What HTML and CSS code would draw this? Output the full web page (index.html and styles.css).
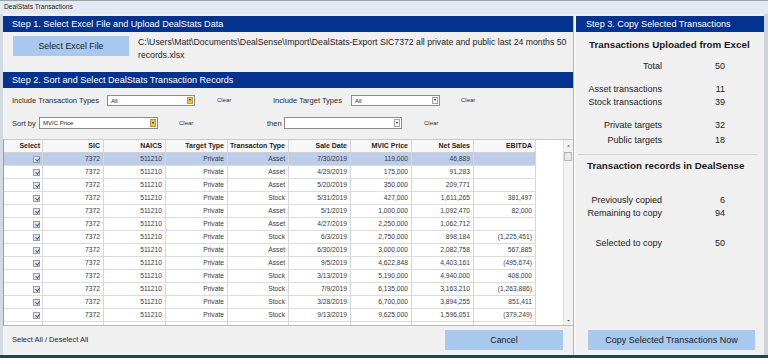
FILE: index.html
```html
<!DOCTYPE html>
<html>
<head>
<meta charset="utf-8">
<title>DealStats Transactions</title>
<link rel="stylesheet" href="styles.css">
</head>
<body>
<div class="window">
  <div class="titlebar">DealStats Transactions</div>
  <div class="main">
    <div class="left">
      <div class="step-head">Step 1. Select Excel File and Upload DealStats Data</div>
      <div class="step1">
        <div class="btn btn-select">Select Excel File</div>
        <div class="path">C:\Users\Matt\Documents\DealSense\Import\DealStats-Export SIC7372 all private and public last 24 months 50<br>records.xlsx</div>
      </div>
      <div class="step-head">Step 2. Sort and Select DealStats Transaction Records</div>
      <div class="filters">
        <div class="frow r1">
          <span class="lbl w-l1">Include Transaction Types</span>
          <div class="combo w-c1"><span class="ctext">All</span><span class="carrow yellow"><i></i></span></div>
          <span class="clear m-c1 w-cl1">Clear</span>
          <span class="lbl w-l2">Include Target Types</span>
          <div class="combo w-c2"><span class="ctext">All</span><span class="carrow"><i></i></span></div>
          <span class="clear m-c2">Clear</span>
        </div>
        <div class="frow r2">
          <span class="lbl w-l3">Sort by</span>
          <div class="combo w-c3"><span class="ctext">MVIC Price</span><span class="carrow yellow"><i></i></span></div>
          <span class="clear m-c3 w-cl3">Clear</span>
          <span class="lbl w-l4">then</span>
          <div class="combo w-c4"><span class="ctext"></span><span class="carrow"><i></i></span></div>
          <span class="clear m-c4">Clear</span>
        </div>
      </div>
      <div class="grid">
        <div class="gtable">
          <div class="grow ghead"><div>Select</div><div>SIC</div><div>NAICS</div><div>Target Type</div><div>Transacton Type</div><div>Sale Date</div><div>MVIC Price</div><div>Net Sales</div><div>EBITDA</div></div>
          <div class="grow sel"><div><span class="cb"></span></div><div>7372</div><div>511210</div><div>Private</div><div>Asset</div><div>7/30/2019</div><div>119,000</div><div>46,889</div><div></div></div>
          <div class="grow"><div><span class="cb"></span></div><div>7372</div><div>511210</div><div>Private</div><div>Asset</div><div>4/29/2019</div><div>175,000</div><div>91,283</div><div></div></div>
          <div class="grow"><div><span class="cb"></span></div><div>7372</div><div>511210</div><div>Private</div><div>Asset</div><div>5/20/2019</div><div>350,000</div><div>209,771</div><div></div></div>
          <div class="grow"><div><span class="cb"></span></div><div>7372</div><div>511210</div><div>Private</div><div>Stock</div><div>5/31/2019</div><div>427,000</div><div>1,611,265</div><div>381,497</div></div>
          <div class="grow"><div><span class="cb"></span></div><div>7372</div><div>511210</div><div>Private</div><div>Asset</div><div>5/1/2019</div><div>1,000,000</div><div>1,092,470</div><div>82,000</div></div>
          <div class="grow"><div><span class="cb"></span></div><div>7372</div><div>511210</div><div>Private</div><div>Asset</div><div>4/27/2019</div><div>2,250,000</div><div>1,062,712</div><div></div></div>
          <div class="grow"><div><span class="cb"></span></div><div>7372</div><div>511210</div><div>Private</div><div>Stock</div><div>6/3/2019</div><div>2,750,000</div><div>898,184</div><div>(1,225,451)</div></div>
          <div class="grow"><div><span class="cb"></span></div><div>7372</div><div>511210</div><div>Private</div><div>Asset</div><div>6/30/2019</div><div>3,000,000</div><div>2,082,758</div><div>567,885</div></div>
          <div class="grow"><div><span class="cb"></span></div><div>7372</div><div>511210</div><div>Private</div><div>Asset</div><div>9/5/2019</div><div>4,622,848</div><div>4,403,161</div><div>(495,674)</div></div>
          <div class="grow"><div><span class="cb"></span></div><div>7372</div><div>511210</div><div>Private</div><div>Stock</div><div>3/13/2019</div><div>5,190,000</div><div>4,940,000</div><div>408,000</div></div>
          <div class="grow"><div><span class="cb"></span></div><div>7372</div><div>511210</div><div>Private</div><div>Stock</div><div>7/9/2019</div><div>6,135,000</div><div>3,163,210</div><div>(1,263,886)</div></div>
          <div class="grow"><div><span class="cb"></span></div><div>7372</div><div>511210</div><div>Private</div><div>Stock</div><div>3/28/2019</div><div>6,700,000</div><div>3,894,255</div><div>851,411</div></div>
          <div class="grow"><div><span class="cb"></span></div><div>7372</div><div>511210</div><div>Private</div><div>Stock</div><div>9/13/2019</div><div>9,625,000</div><div>1,596,051</div><div>(379,249)</div></div>
          <div class="grow"><div><span class="cb"></span></div><div></div><div></div><div></div><div></div><div></div><div></div><div></div><div></div></div>
        </div>
        <div class="vscroll">
          <div class="sbtn"><svg width="9" height="9" viewBox="0 0 9 9"><path d="M3 5.5 L4.5 4 L6 5.5 Z" fill="#555"/></svg></div>
          <div class="thumb"></div>
          <div class="sfill"></div>
          <div class="sbtn"><svg width="9" height="9" viewBox="0 0 9 9"><path d="M3 4 L4.5 5.5 L6 4 Z" fill="#555"/></svg></div>
        </div>
      </div>
      <div class="lbottom">
        <span class="selall">Select All / Deselect All</span>
        <div class="btn btn-cancel">Cancel</div>
      </div>
    </div>
    <div class="sep"></div>
    <div class="right">
      <div class="step-head rh">Step 3. Copy Selected Transactions</div>
      <div class="rtitle t1">Transactions Uploaded from Excel</div>
      <div class="stat s-total"><span class="k">Total</span><span class="v">50</span></div>
      <div class="stat s-asset"><span class="k">Asset transactions</span><span class="v">11</span></div>
      <div class="stat"><span class="k">Stock transactions</span><span class="v">39</span></div>
      <div class="stat s-priv"><span class="k">Private targets</span><span class="v">32</span></div>
      <div class="stat s-pub"><span class="k">Public targets</span><span class="v">18</span></div>
      <div class="rline"></div>
      <div class="rtitle t2">Transaction records in DealSense</div>
      <div class="stat s-prev"><span class="k">Previously copied</span><span class="v">6</span></div>
      <div class="stat"><span class="k">Remaining to copy</span><span class="v">94</span></div>
      <div class="stat s-selc"><span class="k">Selected to copy</span><span class="v">50</span></div>
      <div class="btn btn-copy">Copy Selected Transactions Now</div>
    </div>
  </div>
</div>
</body>
</html>
```
FILE: styles.css
```css
* { box-sizing: border-box; }
html, body { margin: 0; padding: 0; }
body {
  width: 768px;
  height: 358px;
  overflow: hidden;
  font-family: "Liberation Sans", Arial, sans-serif;
  color: #222;
  background: #f0f0f0;
}
.window {
  width: 768px;
  height: 358px;
  display: flex;
  flex-direction: column;
  background: #f0f0f0;
  border-bottom: 3px solid #1f4655;
}
.titlebar {
  height: 14px;
  flex: none;
  background: #e3e9f0;
  border-top: 1px solid #9aa3ad;
  font-size: 6.7px;
  line-height: 12px;
  padding-left: 4px;
  color: #222;
  white-space: nowrap;
}
.main {
  flex: 1;
  min-height: 0;
  display: flex;
  padding-top: 2px;
  border-left: 3px solid #d3dae2;
  border-right: 4px solid #cdd3da;
}
.left {
  width: 570px;
  flex: none;
  display: flex;
  flex-direction: column;
  background: #f0f0f0;
}
.sep {
  width: 3px;
  flex: none;
  border-left: 1px solid #b5b5b5;
  background: #f6f6f6;
}
.right {
  width: 188px;
  flex: none;
  display: flex;
  flex-direction: column;
  background: #f0f0f0;
}
.step-head {
  height: 16px;
  flex: none;
  background: #04328f;
  color: #fff;
  font-size: 9.1px;
  line-height: 16px;
  padding-left: 9px;
  white-space: nowrap;
}
.step-head.rh { padding-left: 10px; }

.btn {
  background: #a8c8ee;
  display: flex;
  align-items: center;
  justify-content: center;
  font-size: 8.8px;
  color: #1b1b1b;
  white-space: nowrap;
}

/* step 1 */
.step1 {
  height: 40px;
  flex: none;
  display: flex;
  align-items: flex-start;
}
.btn-select {
  margin: 4px 0 0 10px;
  width: 116px;
  height: 20px;
}
.path {
  margin: 4px 0 0 9px;
  font-size: 8.7px;
  line-height: 13px;
  color: #1e1e1e;
  white-space: nowrap;
}

/* filters */
.filters {
  height: 51px;
  flex: none;
  padding-left: 9px;
}
.frow {
  display: flex;
  align-items: center;
  height: 12px;
}
.frow.r1 { margin-top: 6px; }
.frow.r2 { margin-top: 11px; }
.lbl {
  font-size: 7.5px;
  color: #2a2a2a;
  white-space: nowrap;
  flex: none;
}
.w-l1 { width: 95px; }
.w-l2 { width: 78px; }
.w-l3 { width: 27px; }
.w-l4 { width: 17px; }
.combo {
  height: 12px;
  flex: none;
  display: flex;
  background: #fff;
  border: 1px solid #8d8d8d;
  padding: 1px;
}
.r1 .combo { height: 11px; }
.w-c1 { width: 88px; }
.w-c2 { width: 89px; }
.w-c3 { width: 119px; }
.w-c4 { width: 118px; }
.ctext {
  flex: 1;
  font-size: 6px;
  line-height: 8px;
  padding-left: 2px;
  color: #222;
  white-space: nowrap;
}
.carrow {
  width: 6px;
  flex: none;
  border: 1px solid #a5a5a5;
  background: #f4f4f4;
  display: flex;
  align-items: center;
  justify-content: center;
}
.carrow.yellow {
  background: #f1c24c;
  border-color: #b99a45;
}
.carrow i {
  display: block;
  width: 0;
  height: 0;
  border-left: 1.5px solid transparent;
  border-right: 1.5px solid transparent;
  border-top: 2px solid #222;
}
.clear {
  font-size: 6px;
  color: #333;
  flex: none;
}
.m-c1 { margin-left: 22px; }
.w-cl1 { width: 56px; }
.m-c2 { margin-left: 21px; }
.m-c3 { margin-left: 21px; }
.w-cl3 { width: 88px; }
.m-c4 { margin-left: 22px; }

/* grid */
.grid {
  height: 187px;
  flex: none;
  display: flex;
  background: #fff;
  border-top: 1px solid #c9c9c9;
  border-left: 1px solid #9c9c9c;
  border-bottom: 1px solid #b9b9b9;
  overflow: hidden;
}
.gtable {
  width: 559px;
  flex: none;
  overflow: hidden;
}
.grow {
  display: grid;
  grid-template-columns: 39px 61px 62px 62px 61px 62px 61px 62px 62px;
  height: 13px;
}
.grow > div {
  border-right: 1px solid #d6d6d6;
  border-bottom: 1px solid #dcdcdc;
  text-align: right;
  padding-right: 3px;
  font-size: 6.7px;
  line-height: 12px;
  color: #383838;
  white-space: nowrap;
  overflow: hidden;
}
.grow > div:first-child {
  display: flex;
  align-items: center;
  justify-content: flex-end;
  padding-right: 2px;
}
.ghead > div {
  background: #f7f7f7;
  font-weight: bold;
  font-size: 7px;
  color: #1e1e1e;
  border-bottom: 1px solid #cfcfcf;
}
.ghead > div:first-child { display: block; }
.grow.sel > div { background: #bccde9; }
.cb {
  display: block;
  width: 7px;
  height: 7px;
  border: 1px solid #9e9e9e;
  background: #e4e4e4;
  position: relative;
}
.cb::after {
  content: "";
  position: absolute;
  left: 1.5px;
  top: 0px;
  width: 1.6px;
  height: 3.4px;
  border-right: 1px solid #2e58bb;
  border-bottom: 1px solid #2e58bb;
  transform: rotate(40deg);
}
.vscroll {
  width: 10px;
  flex: none;
  display: flex;
  flex-direction: column;
  background: #f2f2f2;
  border-left: 1px solid #e2e2e2;
}
.sbtn {
  height: 10px;
  flex: none;
  display: flex;
  align-items: center;
  justify-content: center;
}
.thumb {
  height: 9px;
  flex: none;
  margin: 2px 1px 0 0;
  background: #e8e8e8;
  border: 1px solid #b5b5b5;
}
.sfill { flex: 1; }

/* left bottom */
.lbottom {
  flex: 1;
  display: flex;
  align-items: flex-start;
  padding: 4px 10px 0 9px;
}
.selall {
  font-size: 7.5px;
  color: #2a2a2a;
  line-height: 20px;
}
.btn-cancel {
  margin-left: auto;
  width: 118px;
  height: 20px;
}

/* right panel */
.rtitle {
  font-weight: bold;
  font-size: 9.8px;
  line-height: 13px;
  padding-left: 13px;
  color: #1a1a1a;
  white-space: nowrap;
}
.t1 { margin-top: 6px; }
.t2 { margin-top: 4px; padding-left: 11px; }
.stat {
  display: flex;
  font-size: 9px;
  line-height: 13px;
  color: #222;
  white-space: nowrap;
}
.stat .k { width: 86px; text-align: right; }
.stat .v { width: 63px; text-align: right; }
.s-total { margin-top: 9px; }
.s-asset { margin-top: 10px; }
.s-priv { margin-top: 10px; }
.s-pub { margin-top: 2px; }
.s-prev { margin-top: 22px; }
.s-selc { margin-top: 17px; }
.rline {
  height: 1px;
  margin: 7px 7px 0 2px;
  background: #d2d2d2;
}
.btn-copy {
  margin: auto 0 5px 12px;
  width: 167px;
  height: 20px;
  font-size: 9px;
}
```
